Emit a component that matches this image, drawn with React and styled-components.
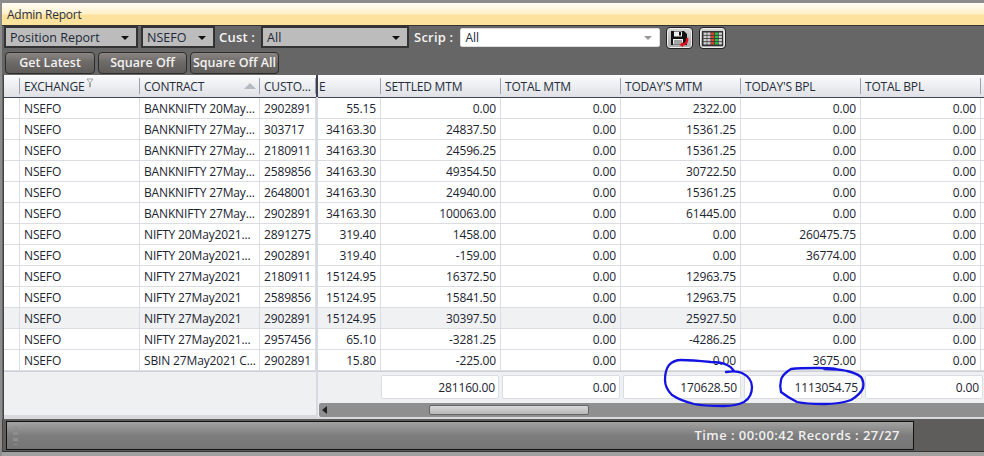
import React from "react";
import styled, { createGlobalStyle } from "styled-components";

const Global = createGlobalStyle`
  html, body { margin: 0; padding: 0; width: 984px; height: 456px; overflow: hidden; background: #666; }
  * { box-sizing: border-box; }
`;
const Window = styled.div`
  position: relative; width: 984px; height: 456px; display: flex; flex-direction: column;
  background: #666; border-top: 3px solid #8c8c8c; border-left: 2px solid #8c8c8c; overflow: hidden;
  font: 12px/16px "Open Sans", "Noto Sans", sans-serif; color: #1c2430;
`;
const TitleBar = styled.div`
  height: 23px; padding: 4px 0 0 5px; font-size: 12px; letter-spacing: -.25px; color: #2a3040;
  background: linear-gradient(#fffdf6 0%, #fff0c8 50%, #fde29c 56%, #fde39e 100%);
  border-bottom: 1px solid #333;
`;
const Toolbar = styled.div`
  height: 26px; padding: 0 0 0 2px; display: flex; align-items: flex-start; gap: 3px;
`;
const Select = styled.div`
  width: ${p => p.$w}px; height: ${p => (p.$light ? 19 : 22)}px; margin-top: ${p => (p.$light ? 2 : 0)}px; flex: none;
  display: flex; align-items: center; justify-content: space-between;
  padding: 1px 7px 0 ${p => (p.$light ? 4 : 4)}px; font-size: ${p => (p.$light ? 12 : 12.5)}px; color: #1d2838;
  background: ${p => (p.$light ? "#fff" : "#bcbcbc")};
  border: ${p => (p.$light ? "1px solid #ddd" : "2px solid #333")};
  border-radius: ${p => (p.$light ? 2 : 0)}px;
`;
const Caret = styled.i`
  width: 0; height: 0; border: 4px solid transparent; border-bottom: 0;
  border-top: 4px solid ${p => (p.$soft ? "#999" : "#111")};
`;
const Label = styled.span`
  color: #f4f4f4; font-weight: 600; font-size: 13px; margin: 3px ${p => p.$mr}px 0 ${p => p.$ml}px; letter-spacing: .2px;
`;
const IconBtn = styled.div`
  width: 27px; height: 22px; margin-left: ${p => p.$ml || 0}px; margin-top: 1px; flex: none; display: flex; align-items: center; justify-content: center;
  background: linear-gradient(#d6d6d6, #a8a8a8); border: 1px solid #222; border-radius: 4px; box-shadow: inset 0 0 0 1px #eee;
`;
const Actions = styled.div`
  height: 23px; padding-left: 3px; display: flex; gap: 3px;
`;
const ActionBtn = styled.button`
  width: ${p => p.$w}px; height: 22px; padding: 0; color: #f2f2f2; font: 600 12.5px/18px "Open Sans", sans-serif;
  background: linear-gradient(#8b8683 0%, #6e6a68 45%, #5f5b59 100%);
  border: 1px solid #2c2c2c; border-radius: 4px;
`;
const Grid = styled.div`
  height: 344px; margin-left: 1px; display: flex; background: #eff0f2; border-left: 1px solid #444;
`;
const LeftPane = styled.div`
  width: 312px; flex: none; display: flex; flex-direction: column;
`;
const Splitter = styled.div`
  width: 2px; flex: none; background: linear-gradient(#3c4250 0 22px, #d9d9e4 22px);
`;
const RightPane = styled.div`
  flex: 1; min-width: 0; display: flex; flex-direction: column;
`;
const Row = styled.div`
  height: ${p => (p.$head ? 23 : 21)}px; display: flex; flex: none;
  background: ${p => (p.$head ? "linear-gradient(#fbfbfc, #dfe1e6)" : p.$sel ? "#f0f1f3" : "#fff")};
  border-bottom: ${p => (p.$head ? "1px solid #3f4656" : "1px solid #dcdde2")};
`;
const Cell = styled.div`
  width: ${p => p.$w}px; flex: none; padding: 0 4px; overflow: hidden; white-space: nowrap;
  text-align: ${p => (p.$num ? "right" : "left")}; line-height: 21px; font-size: 12px; letter-spacing: -.15px;
  border-right: 1px solid #dcdde2;
`;
const HeadCell = styled.div`
  position: relative; width: ${p => p.$w}px; flex: none; padding: 0 0 0 4px; margin-top: 3px; height: 16px; white-space: nowrap; overflow: hidden;
  line-height: 18px; font-size: 12px; letter-spacing: -.2px; color: #252d3b;
  border-right: 1px solid #9aa0ac;
`;
const ClipE = styled.span` margin-left: -3px; `;
const Pin = styled.svg` position: absolute; left: 66px; top: 0; `;
const SortMark = styled.i`
  position: absolute; right: 3px; top: 5px; width: 0; height: 0;
  border: 6px solid transparent; border-top: 0; border-bottom: 6px solid #b5b9c1;
`;
const Filler = styled.div` flex: 1; background: linear-gradient(#eff0f2 calc(100% - 4px), #d8d9dd calc(100% - 4px)); `;
const FooterLine = styled.div` height: 1px; flex: none; background: #cfd0d5; `;
const Summary = styled.div`
  height: 31px; flex: none; display: flex; gap: 3px; padding: 3px 0 0 63px; background: #eff0f2;
`;
const SumBox = styled.div`
  width: 118px; height: 24px; flex: none; background: #fff; border: 1px solid #dcdde2; border-radius: 2px;
  text-align: right; padding: 0 3px; line-height: 23px; font-size: 12px; letter-spacing: -.15px; color: #1c2430;
`;
const Scroll = styled.div`
  position: relative; height: 14px; margin: 0 0 0 1px; background: #8f8f8f; border-radius: 2px 0 0 2px; flex: none;
`;
const ScrollArrow = styled.i`
  position: absolute; left: 3px; top: 3px; width: 0; height: 0; border: 4px solid transparent; border-left: 0; border-right: 5px solid #222;
`;
const Thumb = styled.div`
  position: absolute; left: 110px; top: 2px; width: 160px; height: 10px; background: linear-gradient(#d8d8d8, #b8b8b8); border: 1px solid #666; border-radius: 2px;
`;
const StatusWrap = styled.div` height: 32px; flex: none; background: #5f5d5b; padding: 2px 0 0 3px; border-left: 1px solid #444; margin-left: 0; `;
const Status = styled.div`
  position: relative; width: 908px; height: 29px; border: 1px solid #111; padding-right: 13px; text-align: right;
  background: linear-gradient(#a2a2a2 0%, #7d7d7d 50%, #757575 100%);
  color: #f0f0f0; font-weight: 600; font-size: 13px; line-height: 27px; letter-spacing: .45px;
`;
const Grip = styled.div`
  position: absolute; left: 6px; top: 4px; width: 5px; height: 19px;
  background: repeating-linear-gradient(#8e8e8e 0 3px, transparent 3px 6px);
  border-radius: 2px;
`;
const FrameBottom = styled.div` flex: 1; background: #a0a0a0; border-top: 1px solid #333; `;
const Ink = styled.svg` position: absolute; left: -2px; top: -3px; pointer-events: none; `;

const leftCols = [16, 120, 120, 56];
const rows = [
  ["BANKNIFTY 20May...", "2902891", "55.15", "0.00", "2322.00", "0.00"],
  ["BANKNIFTY 27May...", "303717", "34163.30", "24837.50", "15361.25", "0.00"],
  ["BANKNIFTY 27May...", "2180911", "34163.30", "24596.25", "15361.25", "0.00"],
  ["BANKNIFTY 27May...", "2589856", "34163.30", "49354.50", "30722.50", "0.00"],
  ["BANKNIFTY 27May...", "2648001", "34163.30", "24940.00", "15361.25", "0.00"],
  ["BANKNIFTY 27May...", "2902891", "34163.30", "100063.00", "61445.00", "0.00"],
  ["NIFTY 20May2021...", "2891275", "319.40", "1458.00", "0.00", "260475.75"],
  ["NIFTY 20May2021...", "2902891", "319.40", "-159.00", "0.00", "36774.00"],
  ["NIFTY 27May2021", "2180911", "15124.95", "16372.50", "12963.75", "0.00"],
  ["NIFTY 27May2021", "2589856", "15124.95", "15841.50", "12963.75", "0.00"],
  ["NIFTY 27May2021", "2902891", "15124.95", "30397.50", "25927.50", "0.00"],
  ["NIFTY 27May2021...", "2957456", "65.10", "-3281.25", "-4286.25", "0.00"],
  ["SBIN 27May2021 C...", "2902891", "15.80", "-225.00", "0.00", "3675.00"],
];
const heads = ["SETTLED MTM", "TOTAL MTM", "TODAY'S MTM", "TODAY'S BPL", "TOTAL BPL"];

const SaveIcon = () => (
  <svg width="19" height="17" viewBox="0 0 19 17">
    <path d="M1 1h13l3 3v11H1z" fill="#111" />
    <rect x="4" y="1.5" width="8" height="5" fill="#eee" />
    <rect x="9" y="2" width="2" height="3.5" fill="#111" />
    <rect x="3" y="9" width="10" height="5.5" fill="#f2f2f2" />
    <path d="M4 11h8M4 13h8" stroke="#555" />
    <path d="M17 8c1 4-2 7-6 7" fill="none" stroke="#e01020" strokeWidth="2.4" />
    <path d="M9.5 15l3.5-3v5z" fill="#e01020" />
  </svg>
);
const GridIcon = () => (
  <svg width="21" height="15" viewBox="0 0 21 15">
    <rect width="21" height="15" fill="#333" />
    {[0, 1, 2, 3].map(r => [0, 1, 2, 3, 4].map(c => (
      <rect key={r + "-" + c} x={1.5 + c * 3.8} y={1.5 + r * 3.2} width="3.2" height="2.4"
        fill={c === 2 ? "#e04030" : c === 3 ? "#20c040" : "#cfcfcf"} />
    )))}
  </svg>
);

export default function App() {
  return (
    <Window>
      <Global />
      <TitleBar>Admin Report</TitleBar>
      <Toolbar>
        <Select $w={134}>Position Report<Caret /></Select>
        <Select $w={74}>NSEFO<Caret /></Select>
        <Label $ml={1} $mr={3}>Cust :</Label>
        <Select $w={148}>All<Caret /></Select>
        <Label $ml={2} $mr={4}>Scrip :</Label>
        <Select $w={200} $light>All<Caret $soft /></Select>
        <IconBtn $ml={3}><SaveIcon /></IconBtn>
        <IconBtn $ml={3}><GridIcon /></IconBtn>
      </Toolbar>
      <Actions>
        <ActionBtn $w={90}>Get Latest</ActionBtn>
        <ActionBtn $w={89}>Square Off</ActionBtn>
        <ActionBtn $w={89}>Square Off All</ActionBtn>
      </Actions>
      <Grid>
        <LeftPane>
          <Row $head>
            <HeadCell $w={leftCols[0]} />
            <HeadCell $w={leftCols[1]}>EXCHANGE
              <Pin width="8" height="10" viewBox="0 0 8 10"><path d="M1 1h6L4.5 4.5V9h-1V4.5z" fill="none" stroke="#a5a5a5" /></Pin>
            </HeadCell>
            <HeadCell $w={leftCols[2]}>CONTRACT<SortMark /></HeadCell>
            <HeadCell $w={leftCols[3]}>CUSTO...</HeadCell>
          </Row>
          {rows.map((r, i) => (
            <Row key={i} $sel={i === 10}>
              <Cell $w={leftCols[0]} />
              <Cell $w={leftCols[1]}>NSEFO</Cell>
              <Cell $w={leftCols[2]}>{r[0]}</Cell>
              <Cell $w={leftCols[3]}>{r[1]}</Cell>
            </Row>
          ))}
          <FooterLine />
          <Filler />
        </LeftPane>
        <Splitter />
        <RightPane>
          <Row $head>
            <HeadCell $w={63}><ClipE>E</ClipE></HeadCell>
            {heads.map(h => <HeadCell key={h} $w={120}>{h}</HeadCell>)}
          </Row>
          {rows.map((r, i) => (
            <Row key={i} $sel={i === 10}>
              <Cell $w={63} $num>{r[2]}</Cell>
              <Cell $w={120} $num>{r[3]}</Cell>
              <Cell $w={120} $num>0.00</Cell>
              <Cell $w={120} $num>{r[4]}</Cell>
              <Cell $w={120} $num>{r[5]}</Cell>
              <Cell $w={120} $num>0.00</Cell>
            </Row>
          ))}
          <FooterLine />
          <Summary>
            <SumBox>281160.00</SumBox>
            <SumBox>0.00</SumBox>
            <SumBox>170628.50</SumBox>
            <SumBox>1113054.75</SumBox>
            <SumBox>0.00</SumBox>
          </Summary>
          <Scroll><ScrollArrow /><Thumb /></Scroll>
          <Filler />
        </RightPane>
      </Grid>
      <StatusWrap>
        <Status><Grip />Time : 00:00:42 Records : 27/27</Status>
      </StatusWrap>
      <FrameBottom />
      <Ink width="984" height="456" viewBox="0 0 984 456" fill="none" stroke="#1414e0" strokeWidth="2.3" strokeLinecap="round">
        <path d="M726 372C732 371 738 371 742 373C748 376 752 381 752 387C752 394 749 399 744 402C738 405 731 406 724 406C713 406 703 406 694 404C686 402 678 399 672 395C668 391 665 386 665 380C665 374 666 369 669 365C672 362 676 360 681 360C691 360 701 361 711 362C717 362 723 363 727 365C730 366 732 368 734 371" />
        <path d="M836 369C829 368 823 368 817 368C808 368 799 368 791 369C786 372 782 376 781 380C780 384 780 388 781 392C786 396 791 399 797 402C806 404 815 404 824 404C833 404 843 403 851 400C856 397 861 393 863 388C864 384 863 380 861 377C857 374 852 372 847 371C839 369 832 369 824 369" />
      </Ink>
    </Window>
  );
}
